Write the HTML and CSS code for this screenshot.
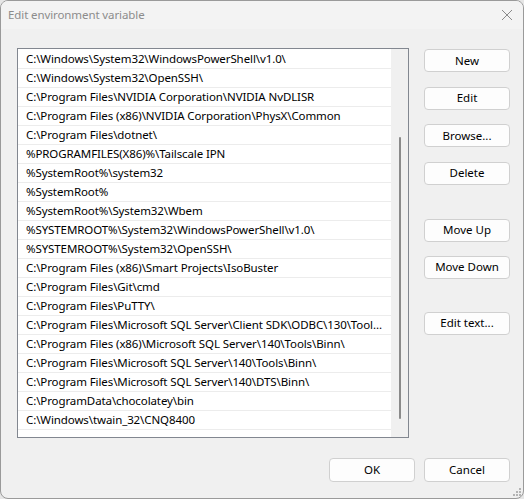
FILE: index.html
```html
<!DOCTYPE html>
<html>
<head>
<meta charset="utf-8">
<link rel="stylesheet" href="styles.css">
</head>
<body>
<div class="window">
  <div class="titlebar">
    <span class="title">Edit environment variable</span>
    <svg class="close" width="12" height="12" viewBox="0 0 12 12"><path d="M1 1 L11 11 M11 1 L1 11" stroke="#8a8a8a" stroke-width="1" fill="none"/></svg>
  </div>
  <div class="content">
    <div class="listbox">
      <ul class="items">
        <li>C:\Windows\System32\WindowsPowerShell\v1.0\</li>
        <li>C:\Windows\System32\OpenSSH\</li>
        <li>C:\Program Files\NVIDIA Corporation\NVIDIA NvDLISR</li>
        <li>C:\Program Files (x86)\NVIDIA Corporation\PhysX\Common</li>
        <li>C:\Program Files\dotnet\</li>
        <li>%PROGRAMFILES(X86)%\Tailscale IPN</li>
        <li>%SystemRoot%\system32</li>
        <li>%SystemRoot%</li>
        <li>%SystemRoot%\System32\Wbem</li>
        <li>%SYSTEMROOT%\System32\WindowsPowerShell\v1.0\</li>
        <li>%SYSTEMROOT%\System32\OpenSSH\</li>
        <li>C:\Program Files (x86)\Smart Projects\IsoBuster</li>
        <li>C:\Program Files\Git\cmd</li>
        <li>C:\Program Files\PuTTY\</li>
        <li>C:\Program Files\Microsoft SQL Server\Client SDK\ODBC\130\Tools\Binn\</li>
        <li>C:\Program Files (x86)\Microsoft SQL Server\140\Tools\Binn\</li>
        <li>C:\Program Files\Microsoft SQL Server\140\Tools\Binn\</li>
        <li>C:\Program Files\Microsoft SQL Server\140\DTS\Binn\</li>
        <li>C:\ProgramData\chocolatey\bin</li>
        <li>C:\Windows\twain_32\CNQ8400</li>
      </ul>
      <div class="scrollbar"><div class="thumb"></div></div>
    </div>
    <div class="actions">
      <button class="btn">New</button>
      <button class="btn">Edit</button>
      <button class="btn">Browse...</button>
      <button class="btn">Delete</button>
      <button class="btn group-start">Move Up</button>
      <button class="btn tight">Move Down</button>
      <button class="btn group-start2">Edit text...</button>
    </div>
  </div>
  <div class="footer">
    <button class="btn">OK</button>
    <button class="btn">Cancel</button>
  </div>
  <svg class="grip" width="10" height="10" viewBox="0 0 10 10">
    <rect x="7" y="1" width="2" height="2" fill="#b4b4b4"/>
    <rect x="4" y="4" width="2" height="2" fill="#b4b4b4"/>
    <rect x="7" y="4" width="2" height="2" fill="#b4b4b4"/>
    <rect x="1" y="7" width="2" height="2" fill="#b4b4b4"/>
    <rect x="4" y="7" width="2" height="2" fill="#b4b4b4"/>
    <rect x="7" y="7" width="2" height="2" fill="#b4b4b4"/>
  </svg>
</div>
</body>
</html>
```
FILE: styles.css
```css
* { box-sizing: border-box; }
html, body {
  margin: 0;
  padding: 0;
  background: #e6e6e6;
}
body {
  font-family: "Noto Sans", "Open Sans", sans-serif;
  font-size: 11.5px;
  color: #000;
}
.window {
  position: relative;
  width: 524px;
  height: 499px;
  background: #f0f0f0;
  border: 1px solid #9a9a9a;
  border-radius: 8px;
  overflow: hidden;
  display: flex;
  flex-direction: column;
}
.titlebar {
  height: 28px;
  flex: none;
  background: #f3f3f3;
  display: flex;
  align-items: center;
  justify-content: space-between;
  padding: 0 10px 0 7px;
}
.title {
  color: #8c8c8c;
  font-size: 11.5px;
  letter-spacing: -0.1px;
  line-height: 16px;
}
.close {
  display: block;
}
.content {
  display: flex;
  padding: 19px 0 0 16px;
  gap: 15px;
}
.listbox {
  width: 392px;
  height: 390px;
  flex: none;
  background: #fff;
  border: 1px solid #828790;
  display: flex;
}
.items {
  list-style: none;
  margin: 0;
  padding: 1px 0 0 0;
  width: 373px;
  flex: none;
}
.items li {
  height: 19px;
  line-height: 18px;
  border-bottom: 1px solid #ececec;
  padding: 0 6px 0 8px;
  letter-spacing: -0.1px;
  white-space: nowrap;
  overflow: hidden;
  text-overflow: ellipsis;
}
.scrollbar {
  width: 17px;
  flex: none;
  background: #f0f0f0;
  display: flex;
  justify-content: center;
  padding-top: 88px;
}
.thumb {
  width: 2px;
  height: 282px;
  background: #8a8a8a;
  border-radius: 1px;
}
.actions {
  display: flex;
  flex-direction: column;
  gap: 14.5px;
  padding-top: 1px;
}
.btn {
  width: 86px;
  height: 23px;
  background: #fdfdfd;
  border: 1px solid #d0d0d0;
  border-radius: 4px;
  font-family: "Noto Sans", "Open Sans", sans-serif;
  font-size: 11.5px;
  color: #000;
  padding: 0;
  line-height: 20px;
}
.group-start { margin-top: 19.5px; }
.tight { margin-top: -0.5px; }
.group-start2 { margin-top: 18.5px; }
.footer {
  display: flex;
  justify-content: flex-end;
  gap: 9px;
  padding: 20px 13px 0 0;
}
.footer .btn { height: 24px; }
.grip {
  position: absolute;
  right: 1px;
  bottom: 1px;
}
```
